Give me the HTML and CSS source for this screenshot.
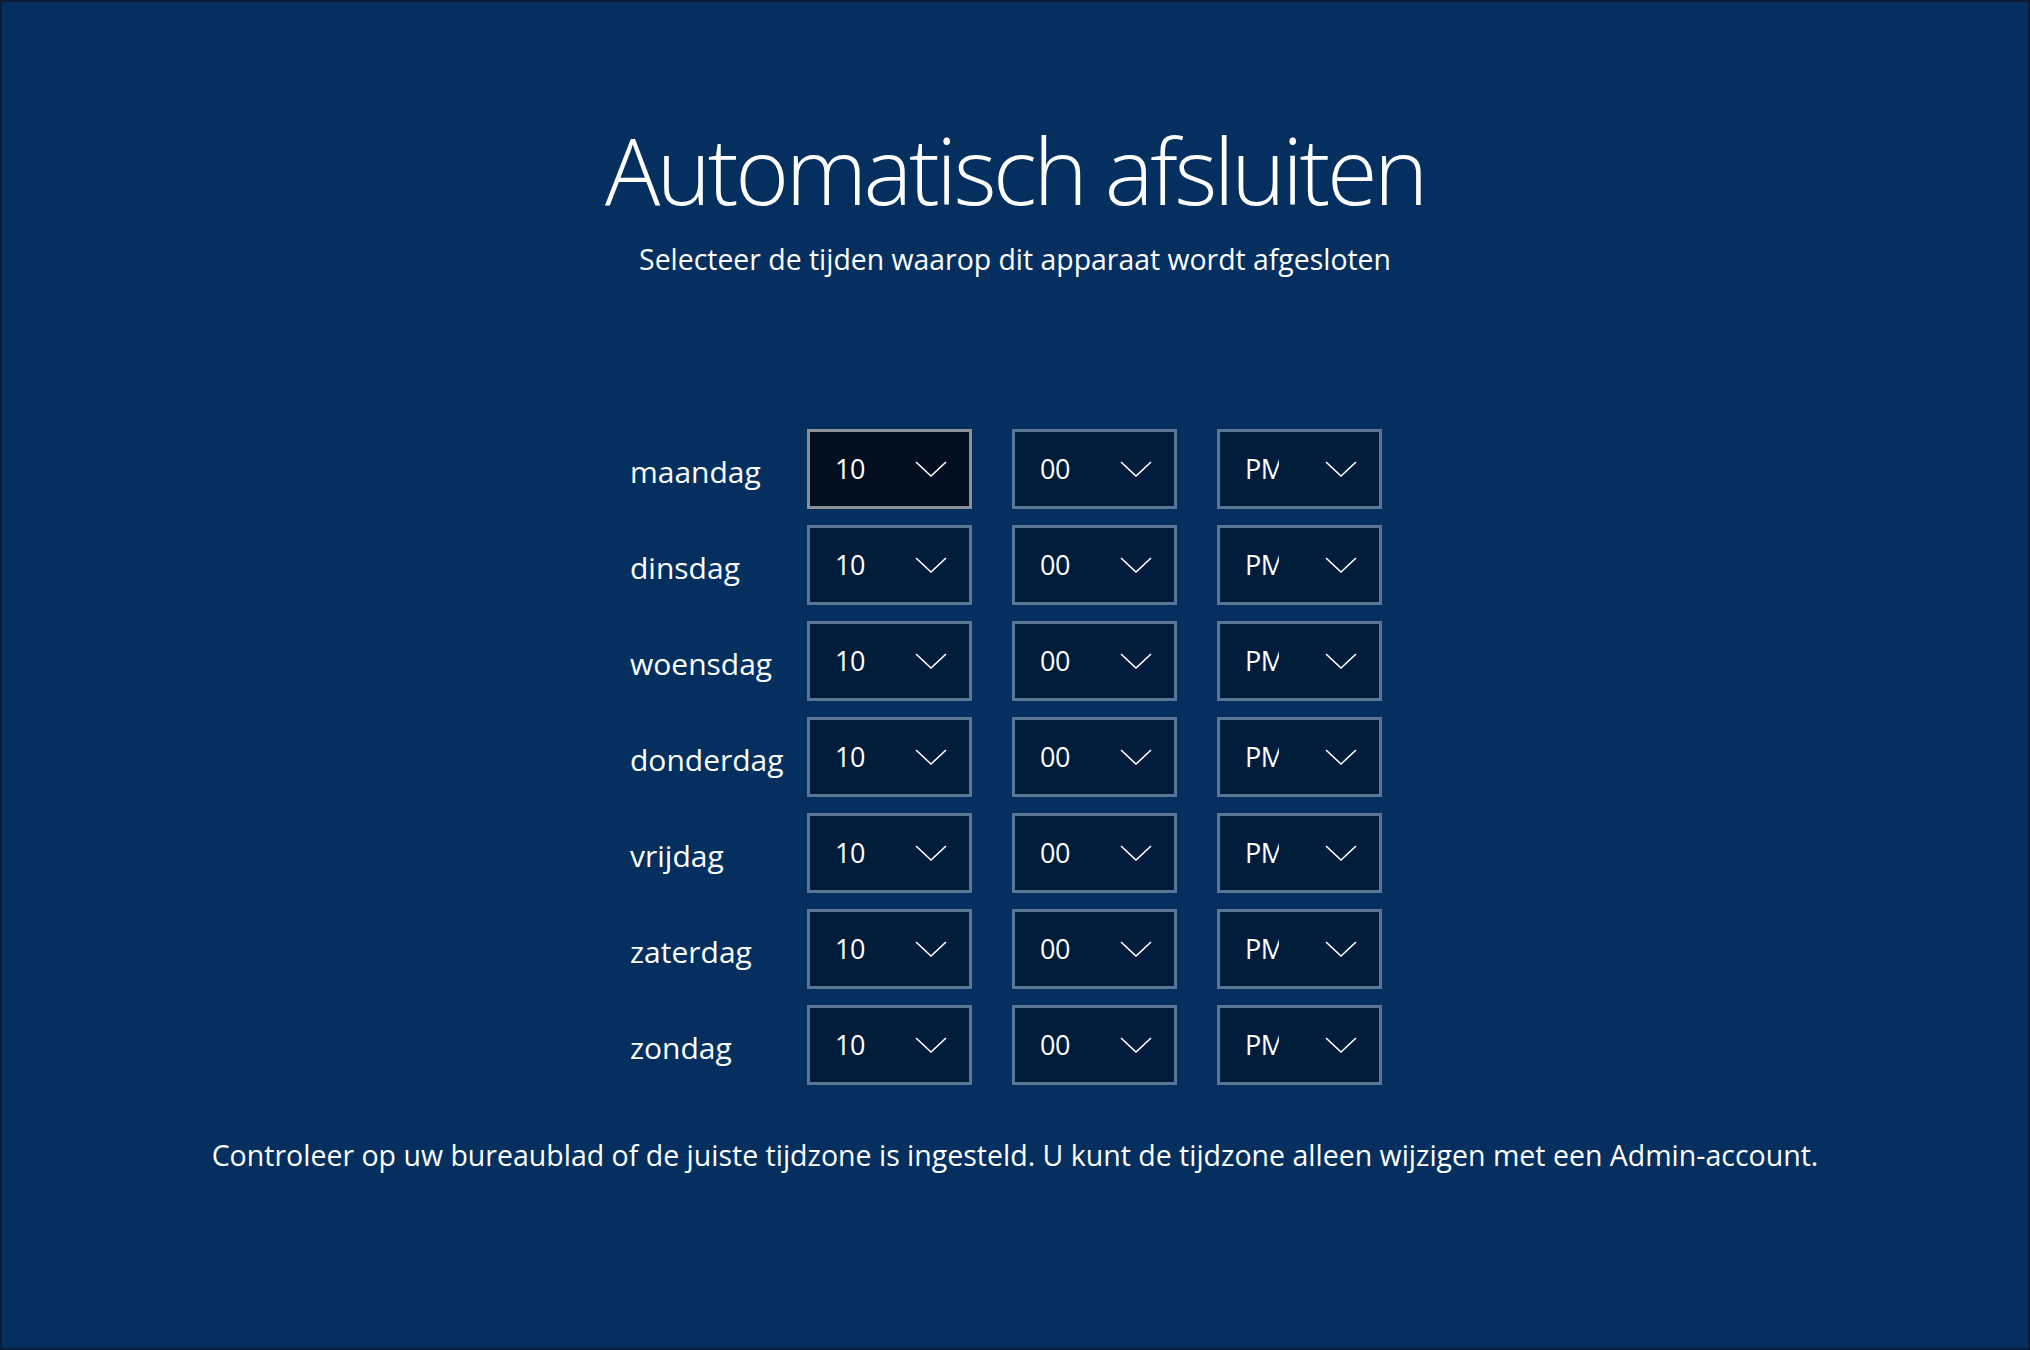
FILE: index.html
```html
<!DOCTYPE html>
<html lang="nl">
<head>
<meta charset="utf-8">
<title>Automatisch afsluiten</title>
<link rel="stylesheet" href="styles.css">
</head>
<body>
<div class="screen">
  <h1 class="title">Automatisch afsluiten</h1>
  <p class="subtitle">Selecteer de tijden waarop dit apparaat wordt afgesloten</p>

  <div class="schedule">
    <div class="row">
      <span class="day">maandag</span>
      <div class="selects">
        <div class="select focused"><span class="value">10</span><svg class="chev" viewBox="0 0 32 16"><polyline points="1,1 16,15 31,1"/></svg></div>
        <div class="select"><span class="value">00</span><svg class="chev" viewBox="0 0 32 16"><polyline points="1,1 16,15 31,1"/></svg></div>
        <div class="select"><span class="value">PM</span><svg class="chev" viewBox="0 0 32 16"><polyline points="1,1 16,15 31,1"/></svg></div>
      </div>
    </div>
    <div class="row">
      <span class="day">dinsdag</span>
      <div class="selects">
        <div class="select"><span class="value">10</span><svg class="chev" viewBox="0 0 32 16"><polyline points="1,1 16,15 31,1"/></svg></div>
        <div class="select"><span class="value">00</span><svg class="chev" viewBox="0 0 32 16"><polyline points="1,1 16,15 31,1"/></svg></div>
        <div class="select"><span class="value">PM</span><svg class="chev" viewBox="0 0 32 16"><polyline points="1,1 16,15 31,1"/></svg></div>
      </div>
    </div>
    <div class="row">
      <span class="day">woensdag</span>
      <div class="selects">
        <div class="select"><span class="value">10</span><svg class="chev" viewBox="0 0 32 16"><polyline points="1,1 16,15 31,1"/></svg></div>
        <div class="select"><span class="value">00</span><svg class="chev" viewBox="0 0 32 16"><polyline points="1,1 16,15 31,1"/></svg></div>
        <div class="select"><span class="value">PM</span><svg class="chev" viewBox="0 0 32 16"><polyline points="1,1 16,15 31,1"/></svg></div>
      </div>
    </div>
    <div class="row">
      <span class="day">donderdag</span>
      <div class="selects">
        <div class="select"><span class="value">10</span><svg class="chev" viewBox="0 0 32 16"><polyline points="1,1 16,15 31,1"/></svg></div>
        <div class="select"><span class="value">00</span><svg class="chev" viewBox="0 0 32 16"><polyline points="1,1 16,15 31,1"/></svg></div>
        <div class="select"><span class="value">PM</span><svg class="chev" viewBox="0 0 32 16"><polyline points="1,1 16,15 31,1"/></svg></div>
      </div>
    </div>
    <div class="row">
      <span class="day">vrijdag</span>
      <div class="selects">
        <div class="select"><span class="value">10</span><svg class="chev" viewBox="0 0 32 16"><polyline points="1,1 16,15 31,1"/></svg></div>
        <div class="select"><span class="value">00</span><svg class="chev" viewBox="0 0 32 16"><polyline points="1,1 16,15 31,1"/></svg></div>
        <div class="select"><span class="value">PM</span><svg class="chev" viewBox="0 0 32 16"><polyline points="1,1 16,15 31,1"/></svg></div>
      </div>
    </div>
    <div class="row">
      <span class="day">zaterdag</span>
      <div class="selects">
        <div class="select"><span class="value">10</span><svg class="chev" viewBox="0 0 32 16"><polyline points="1,1 16,15 31,1"/></svg></div>
        <div class="select"><span class="value">00</span><svg class="chev" viewBox="0 0 32 16"><polyline points="1,1 16,15 31,1"/></svg></div>
        <div class="select"><span class="value">PM</span><svg class="chev" viewBox="0 0 32 16"><polyline points="1,1 16,15 31,1"/></svg></div>
      </div>
    </div>
    <div class="row">
      <span class="day">zondag</span>
      <div class="selects">
        <div class="select"><span class="value">10</span><svg class="chev" viewBox="0 0 32 16"><polyline points="1,1 16,15 31,1"/></svg></div>
        <div class="select"><span class="value">00</span><svg class="chev" viewBox="0 0 32 16"><polyline points="1,1 16,15 31,1"/></svg></div>
        <div class="select"><span class="value">PM</span><svg class="chev" viewBox="0 0 32 16"><polyline points="1,1 16,15 31,1"/></svg></div>
      </div>
    </div>
  </div>

  <p class="note">Controleer op uw bureaublad of de juiste tijdzone is ingesteld. U kunt de tijdzone alleen wijzigen met een Admin-account.</p>
</div>
</body>
</html>
```

FILE: styles.css
```css
html, body {
  margin: 0;
  padding: 0;
  background: #0c1a33;
}

.screen {
  box-sizing: border-box;
  width: 2030px;
  height: 1350px;
  border: 2px solid #0e1b34;
  background: #042f5f;
  color: #ffffff;
  font-family: "Open Sans", "Noto Sans", "Liberation Sans", sans-serif;
  display: flex;
  flex-direction: column;
  align-items: center;
}

.title {
  margin: 118px 0 0 0;
  font-size: 92px;
  font-weight: 300;
  line-height: 100px;
  letter-spacing: -3.4px;
}

.subtitle {
  margin: 21px 0 0 0;
  font-size: 28.4px;
  font-weight: 400;
  line-height: 36px;
}

.schedule {
  margin: 152px 16px 0 0;
  display: flex;
  flex-direction: column;
  gap: 16px;
}

.row {
  display: flex;
  align-items: center;
}

.day {
  width: 175px;
  font-size: 30px;
  line-height: 36px;
  padding-top: 6px;
  margin-left: -2px;
  padding-right: 2px;
}

.selects {
  display: flex;
  gap: 40px;
}

.select {
  box-sizing: border-box;
  width: 165px;
  height: 80px;
  border: 3px solid #5b7594;
  background: #021c3b;
  display: flex;
  align-items: center;
  padding: 0 22px 0 25px;
}

.select.focused {
  border-color: #8c9096;
  background: #020f20;
}

.value {
  width: 34px;
  overflow: hidden;
  white-space: nowrap;
  font-size: 27px;
  line-height: 36px;
  letter-spacing: -0.5px;
}

.chev {
  margin-left: auto;
  width: 32px;
  height: 16px;
  fill: none;
  stroke: #ffffff;
  stroke-width: 1.6;
}

.note {
  margin: 52px 0 0 0;
  font-size: 28.5px;
  line-height: 36px;
}
```
